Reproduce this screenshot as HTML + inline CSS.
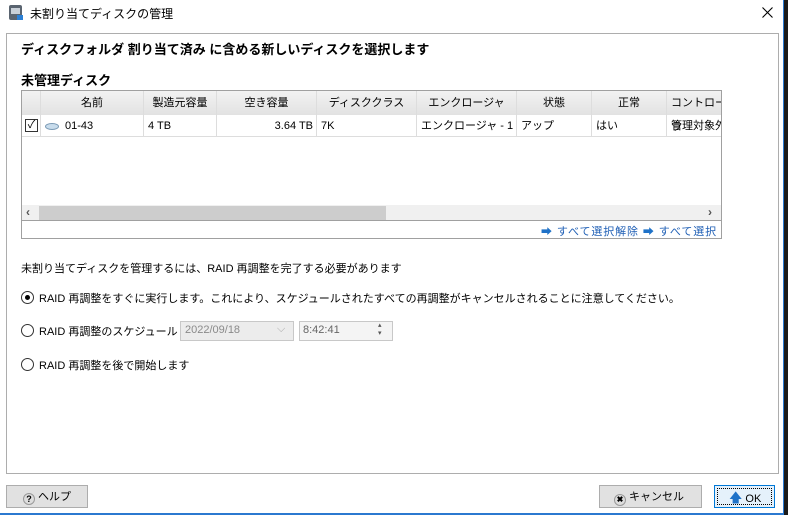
<!DOCTYPE html>
<html><head><meta charset="utf-8"><style>
*{box-sizing:border-box;margin:0;padding:0}
body{width:788px;height:515px;background:#fff;font-family:"Liberation Sans","Noto Sans CJK JP",sans-serif;font-size:11px;color:#000;position:relative;overflow:hidden}
.a{position:absolute}
.th{position:absolute;top:0;height:24px;line-height:24px;text-align:center;border-right:1px solid #ddd}
.td{position:absolute;top:24px;height:22px;line-height:22px;padding-left:4px;border-right:1px solid #ddd;border-bottom:1px solid #ddd;white-space:nowrap;overflow:hidden}
.radio{position:absolute;width:13px;height:13px;border:1px solid #333;border-radius:50%;background:#fff}
.btn{position:absolute;background:#e1e1e1;border:1px solid #adadad;height:23px;line-height:23px;font-size:11px}
</style></head><body>
<div class="a" style="left:783px;top:0;width:5px;height:515px;background:#1a1a1a"></div>
<div class="a" style="left:783px;top:0;width:1px;height:515px;background:#2b79d0"></div>
<div class="a" style="left:0;top:513px;width:784px;height:2px;background:#2b79d0"></div>
<!-- title -->
<div class="a" style="left:9px;top:5px;width:13px;height:15px;background:#5a6470;border-radius:2px"></div>
<div class="a" style="left:11px;top:8px;width:9px;height:6px;background:#c9d0d8"></div>
<div class="a" style="left:17px;top:15px;width:6px;height:5px;background:#2b7fd4"></div>
<div class="a" style="left:30px;top:5px;font-size:12px">未割り当てディスクの管理</div>
<svg class="a" style="left:762px;top:7px" width="11" height="11"><path d="M0.5 0.5L10.5 10.5M10.5 0.5L0.5 10.5" stroke="#000" stroke-width="1.1"/></svg>
<!-- panel -->
<div class="a" style="left:6px;top:33px;width:773px;height:441px;border:1px solid #adadad"></div>
<div class="a" style="left:21px;top:39px;font-size:13px;font-weight:bold">ディスクフォルダ 割り当て済み に含める新しいディスクを選択します</div>
<div class="a" style="left:21px;top:70px;font-size:13px;font-weight:bold">未管理ディスク</div>
<!-- table -->
<div class="a" style="left:21px;top:90px;width:701px;height:149px;border:1px solid #a0a0a0;overflow:hidden">
 <div class="a" style="left:0;top:0;width:700px;height:24px;background:linear-gradient(#f2f2f2,#e2e2e2)"></div>
 <div class="th" style="left:0;width:19px"></div>
 <div class="th" style="left:19px;width:103px">名前</div>
 <div class="th" style="left:122px;width:73px">製造元容量</div>
 <div class="th" style="left:195px;width:100px">空き容量</div>
 <div class="th" style="left:295px;width:100px">ディスククラス</div>
 <div class="th" style="left:395px;width:100px">エンクロージャ</div>
 <div class="th" style="left:495px;width:75px">状態</div>
 <div class="th" style="left:570px;width:75px">正常</div>
 <div class="th" style="left:645px;width:70px;text-align:left;padding-left:4px">コントローラ</div>
 <div class="td" style="left:0;width:19px"><div class="a" style="left:3px;top:4px;width:13px;height:13px;border:1px solid #333;font-size:11px;line-height:11px;text-align:center">✓</div></div>
 <div class="td" style="left:19px;width:103px"><span style="display:inline-block;width:14px;height:7px;border:1px solid #7a9ab5;background:#c8dcec;border-radius:50%;vertical-align:middle;margin-right:6px"></span>01-43</div>
 <div class="td" style="left:122px;width:73px">4 TB</div>
 <div class="td" style="left:195px;width:100px;text-align:right;padding-right:3px">3.64 TB</div>
 <div class="td" style="left:295px;width:100px">7K</div>
 <div class="td" style="left:395px;width:100px">エンクロージャ - 1</div>
 <div class="td" style="left:495px;width:75px">アップ</div>
 <div class="td" style="left:570px;width:75px">はい</div>
 <div class="td" style="left:645px;width:70px">管理対象外</div>
 <div class="a" style="left:0;top:114px;width:700px;height:16px;background:#f0f0f0;border-bottom:1px solid #a0a0a0"></div>
 <div class="a" style="left:17px;top:115px;width:347px;height:14px;background:#cdcdcd"></div>
 <div class="a" style="left:4px;top:114px;font-size:12px;font-weight:bold;color:#555">‹</div>
 <div class="a" style="left:686px;top:114px;font-size:12px;font-weight:bold;color:#555">›</div>
 <div class="a" style="left:519px;top:132px;color:#1f5fb5;white-space:nowrap;letter-spacing:0.9px"><span style="color:#1f72c8">➡</span> すべて選択解除 <span style="color:#1f72c8">➡</span> すべて選択</div>
</div>
<div class="a" style="left:21px;top:260px">未割り当てディスクを管理するには、RAID 再調整を完了する必要があります</div>
<div class="radio" style="left:21px;top:291px"><div class="a" style="left:3px;top:3px;width:5px;height:5px;border-radius:50%;background:#000"></div></div>
<div class="a" style="left:39px;top:290px">RAID 再調整をすぐに実行します。これにより、スケジュールされたすべての再調整がキャンセルされることに注意してください。</div>
<div class="radio" style="left:21px;top:324px"></div>
<div class="a" style="left:39px;top:323px">RAID 再調整のスケジュール</div>
<div class="a" style="left:180px;top:321px;width:114px;height:20px;background:#ececec;border:1px solid #c8c8c8;color:#8a8a8a;padding:2px 4px">2022/09/18<span class="a" style="left:96px;top:1px;color:#aaa">⌵</span></div>
<div class="a" style="left:299px;top:321px;width:94px;height:20px;background:#f4f4f4;border:1px solid #c8c8c8;color:#666;padding:2px 3px">8:42:41<span class="a" style="left:78px;top:0;font-size:7px;line-height:8px;color:#555">▴<br>▾</span></div>
<div class="radio" style="left:21px;top:358px"></div>
<div class="a" style="left:39px;top:357px">RAID 再調整を後で開始します</div>
<!-- buttons -->
<div class="btn" style="left:6px;top:485px;width:82px;padding-left:16px"><span style="display:inline-block;width:12px;height:12px;border-radius:50%;background:#ddd;border:1px solid #999;font-size:9px;line-height:10px;text-align:center;font-weight:bold;vertical-align:-2px">?</span> ヘルプ</div>
<div class="btn" style="left:599px;top:485px;width:103px;padding-left:14px"><span style="display:inline-block;width:12px;height:12px;border-radius:50%;background:#ddd;border:1px solid #999;font-size:8px;line-height:10px;text-align:center;font-weight:bold;vertical-align:-2px">✖</span> キャンセル</div>
<div class="btn" style="left:714px;top:485px;width:61px;border:1px solid #0078d7;background:#e5f1fb;padding-left:14px"><div class="a" style="left:2px;top:2px;right:2px;bottom:2px;border:1px dotted #000"></div><span style="color:#1f72c8;font-size:13px">🡅</span> OK</div>
</body></html>
